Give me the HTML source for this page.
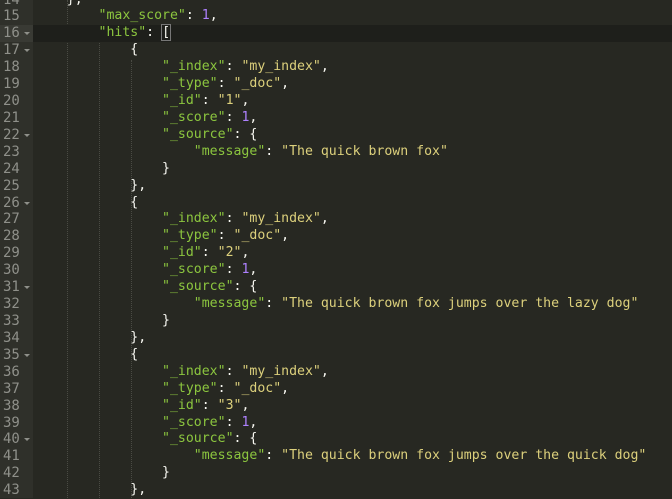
<!DOCTYPE html>
<html><head><meta charset="utf-8"><style>
html,body{margin:0;padding:0;width:672px;height:498px;overflow:hidden;background:#272822;}
.g{position:absolute;left:0;top:0;width:33px;height:498px;background:#2f302a;}
.ed{position:absolute;left:0;top:-8.5px;width:672px;font-family:"DejaVu Sans Mono","Liberation Mono",monospace;font-size:13.2px;}
.l{position:relative;height:16.93px;line-height:16.93px;white-space:pre;}
.l.a{background:#1e1f1b;}
.l.a .n{background:#393a34;}
.n{position:absolute;left:0;width:33px;height:100%;color:#8f908a;font-size:14px;}
.n span{position:absolute;left:3px;}
.n i{position:absolute;left:24px;top:7px;width:0;height:0;border-left:3px solid transparent;border-right:3px solid transparent;border-top:3px solid #8f908a;}
.c{position:absolute;left:35px;color:#f8f8f2;}
.k{color:#8cc63f}.s{color:#dcd07c}.m{color:#ae81ff}
.gd{position:absolute;top:0;width:0;height:498px;border-left:1px dotted #4a4b44;}
</style></head><body>
<div class="g"></div>
<div class="gd" style="left:67px"></div>
<div class="gd" style="left:99px;top:43px;height:455px"></div>
<div class="gd" style="left:131px;top:60px;height:438px"></div>
<div class="ed">
<div class="l"><div class="n"><span>14</span></div><div class="c">    },</div></div>
<div class="l"><div class="n"><span>15</span></div><div class="c">        <span class="k">"max_score"</span>: <span class="m">1</span>,</div></div>
<div class="l a"><div class="n"><span>16</span><i></i></div><div class="c">        <span class="k">"hits"</span>: <span style="outline:1px solid #777;">[</span></div></div>
<div class="l"><div class="n"><span>17</span><i></i></div><div class="c">            {</div></div>
<div class="l"><div class="n"><span>18</span></div><div class="c">                <span class="k">"_index"</span>: <span class="s">"my_index"</span>,</div></div>
<div class="l"><div class="n"><span>19</span></div><div class="c">                <span class="k">"_type"</span>: <span class="s">"_doc"</span>,</div></div>
<div class="l"><div class="n"><span>20</span></div><div class="c">                <span class="k">"_id"</span>: <span class="s">"1"</span>,</div></div>
<div class="l"><div class="n"><span>21</span></div><div class="c">                <span class="k">"_score"</span>: <span class="m">1</span>,</div></div>
<div class="l"><div class="n"><span>22</span><i></i></div><div class="c">                <span class="k">"_source"</span>: {</div></div>
<div class="l"><div class="n"><span>23</span></div><div class="c">                    <span class="k">"message"</span>: <span class="s">"The quick brown fox"</span></div></div>
<div class="l"><div class="n"><span>24</span></div><div class="c">                }</div></div>
<div class="l"><div class="n"><span>25</span></div><div class="c">            },</div></div>
<div class="l"><div class="n"><span>26</span><i></i></div><div class="c">            {</div></div>
<div class="l"><div class="n"><span>27</span></div><div class="c">                <span class="k">"_index"</span>: <span class="s">"my_index"</span>,</div></div>
<div class="l"><div class="n"><span>28</span></div><div class="c">                <span class="k">"_type"</span>: <span class="s">"_doc"</span>,</div></div>
<div class="l"><div class="n"><span>29</span></div><div class="c">                <span class="k">"_id"</span>: <span class="s">"2"</span>,</div></div>
<div class="l"><div class="n"><span>30</span></div><div class="c">                <span class="k">"_score"</span>: <span class="m">1</span>,</div></div>
<div class="l"><div class="n"><span>31</span><i></i></div><div class="c">                <span class="k">"_source"</span>: {</div></div>
<div class="l"><div class="n"><span>32</span></div><div class="c">                    <span class="k">"message"</span>: <span class="s">"The quick brown fox jumps over the lazy dog"</span></div></div>
<div class="l"><div class="n"><span>33</span></div><div class="c">                }</div></div>
<div class="l"><div class="n"><span>34</span></div><div class="c">            },</div></div>
<div class="l"><div class="n"><span>35</span><i></i></div><div class="c">            {</div></div>
<div class="l"><div class="n"><span>36</span></div><div class="c">                <span class="k">"_index"</span>: <span class="s">"my_index"</span>,</div></div>
<div class="l"><div class="n"><span>37</span></div><div class="c">                <span class="k">"_type"</span>: <span class="s">"_doc"</span>,</div></div>
<div class="l"><div class="n"><span>38</span></div><div class="c">                <span class="k">"_id"</span>: <span class="s">"3"</span>,</div></div>
<div class="l"><div class="n"><span>39</span></div><div class="c">                <span class="k">"_score"</span>: <span class="m">1</span>,</div></div>
<div class="l"><div class="n"><span>40</span><i></i></div><div class="c">                <span class="k">"_source"</span>: {</div></div>
<div class="l"><div class="n"><span>41</span></div><div class="c">                    <span class="k">"message"</span>: <span class="s">"The quick brown fox jumps over the quick dog"</span></div></div>
<div class="l"><div class="n"><span>42</span></div><div class="c">                }</div></div>
<div class="l"><div class="n"><span>43</span></div><div class="c">            },</div></div>
</div>
</body></html>
